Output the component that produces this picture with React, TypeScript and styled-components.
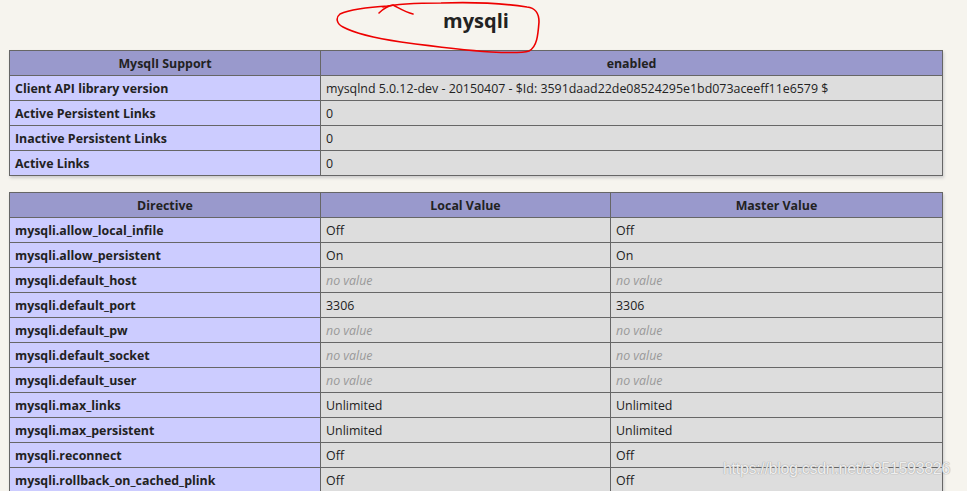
import React from "react";
import styled, { createGlobalStyle } from "styled-components";

const Global = createGlobalStyle`
  html, body { margin: 0; padding: 0; background: #f6f4ee; }
  body {
    font-family: "Open Sans", "Noto Sans", "DejaVu Sans", sans-serif;
    color: #222;
    font-size: 12.4px;
    overflow: hidden;
  }
`;

const Page = styled.div`
  position: relative;
  width: 967px;
  height: 491px;
  padding: 0 0 0 9px;
  box-sizing: border-box;
`;

const TitleWrap = styled.div`
  position: relative;
  width: 934px;
  height: 50px;
  display: flex;
  align-items: center;
  justify-content: center;
`;

const Title = styled.h2`
  margin: 0 0 10px 0;
  font-size: 20px;
  font-weight: 700;
  color: #222;
`;

const Scribble = styled.svg`
  position: absolute;
  left: -9px;
  top: 0;
  pointer-events: none;
`;

const Table = styled.table`
  border-collapse: collapse;
  table-layout: fixed;
  width: 934px;
  box-shadow: 1px 2px 3px #ccc;
  margin-bottom: 16px;
`;

const Th = styled.th`
  background: #9999cc;
  border: 1px solid #666;
  height: 25px;
  padding: 0 5px;
  font-weight: 700;
  text-align: center;
  font-size: 12.4px;
  box-sizing: border-box;
`;

const KeyCell = styled.td`
  background: #ccccff;
  border: 1px solid #666;
  height: 25px;
  padding: 0 5px;
  font-weight: 700;
  font-size: 12.4px;
  white-space: nowrap;
  box-sizing: border-box;
`;

const ValCell = styled.td<{ $empty?: boolean }>`
  background: #dddddd;
  border: 1px solid #666;
  height: 25px;
  padding: 0 5px;
  font-size: 12.4px;
  white-space: nowrap;
  overflow: hidden;
  box-sizing: border-box;
  color: ${(p) => (p.$empty ? "#999" : "#222")};
  font-style: ${(p) => (p.$empty ? "italic" : "normal")};
`;

const Watermark = styled.div`
  position: absolute;
  left: 723px;
  top: 460px;
  font-family: "Liberation Sans", Arial, sans-serif;
  font-size: 16px;
  letter-spacing: -0.3px;
  color: rgba(255, 255, 255, 0.85);
  text-shadow: 0 0 1px #999, 0 0 1px #aaa;
  white-space: nowrap;
  pointer-events: none;
`;

const supportRows: [string, string][] = [
  ["Client API library version", "mysqlnd 5.0.12-dev - 20150407 - $Id: 3591daad22de08524295e1bd073aceeff11e6579 $"],
  ["Active Persistent Links", "0"],
  ["Inactive Persistent Links", "0"],
  ["Active Links", "0"],
];

const NV = "no value";
const directiveRows: [string, string, string][] = [
  ["mysqli.allow_local_infile", "Off", "Off"],
  ["mysqli.allow_persistent", "On", "On"],
  ["mysqli.default_host", NV, NV],
  ["mysqli.default_port", "3306", "3306"],
  ["mysqli.default_pw", NV, NV],
  ["mysqli.default_socket", NV, NV],
  ["mysqli.default_user", NV, NV],
  ["mysqli.max_links", "Unlimited", "Unlimited"],
  ["mysqli.max_persistent", "Unlimited", "Unlimited"],
  ["mysqli.reconnect", "Off", "Off"],
  ["mysqli.rollback_on_cached_plink", "Off", "Off"],
];

export default function App() {
  return (
    <Page>
      <Global />
      <TitleWrap>
        <Title>mysqli</Title>
      </TitleWrap>
      <Table>
        <colgroup>
          <col style={{ width: 311 }} />
          <col />
        </colgroup>
        <thead>
          <tr>
            <Th>MysqlI Support</Th>
            <Th>enabled</Th>
          </tr>
        </thead>
        <tbody>
          {supportRows.map(([k, v]) => (
            <tr key={k}>
              <KeyCell>{k}</KeyCell>
              <ValCell>{v}</ValCell>
            </tr>
          ))}
        </tbody>
      </Table>
      <Table>
        <colgroup>
          <col style={{ width: 311 }} />
          <col style={{ width: 290 }} />
          <col />
        </colgroup>
        <thead>
          <tr>
            <Th>Directive</Th>
            <Th>Local Value</Th>
            <Th>Master Value</Th>
          </tr>
        </thead>
        <tbody>
          {directiveRows.map(([k, l, m]) => (
            <tr key={k}>
              <KeyCell>{k}</KeyCell>
              <ValCell $empty={l === NV}>{l}</ValCell>
              <ValCell $empty={m === NV}>{m}</ValCell>
            </tr>
          ))}
        </tbody>
      </Table>
      <Scribble width="967" height="60" viewBox="0 0 967 60">
        <path
          d="M388 13 C392 9 397 6 402 5 C408 8 414 12 422 14"
          fill="none"
          stroke="#ee0000"
          strokeWidth="1.6"
          strokeLinecap="round"
        />
        <path
          d="M398 6 C380 7 360 9 349 14 C344 18 346 24 352 27 C365 34 390 39 410 42 C440 46 470 50 500 52 C520 53 532 53 538 51 C546 47 547 35 548 22 C548 12 544 8 536 7 C510 3 480 2 450 3 C425 3 405 4 392 7"
          fill="none"
          stroke="#ee0000"
          strokeWidth="1.6"
          strokeLinecap="round"
        />
      </Scribble>
      <Watermark>https://blog.csdn.net/a951593826</Watermark>
    </Page>
  );
}
